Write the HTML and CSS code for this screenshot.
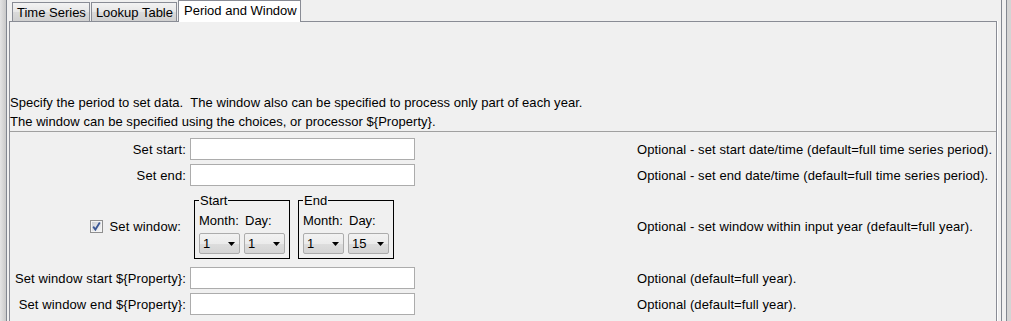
FILE: index.html
```html
<!DOCTYPE html>
<html>
<head>
    <link rel="stylesheet" href="styles.css">
</head>
<body>
    <div class="edge-left"></div>
    <div class="frame">
        <div class="tabs">
            <div class="tab">Time Series</div>
            <div class="tab">Lookup Table</div>
            <div class="tab selected">Period and Window</div>
        </div>
        <div class="panel">
            <div class="intro">
                <div>Specify the period to set data.&nbsp; The window also can be specified to process only part of each year.</div>
                <div>The window can be specified using the choices, or processor ${Property}.</div>
            </div>
            <div class="separator"></div>

            <div class="form">
                <div class="label">Set start:</div>
                <div class="field"></div>
                <div class="desc">Optional - set start date/time (default=full time series period).</div>

                <div class="label">Set end:</div>
                <div class="field"></div>
                <div class="desc">Optional - set end date/time (default=full time series period).</div>

                <div class="label check-label">
                    <svg class="checkbox" width="13" height="13" viewBox="0 0 13 13">
                        <defs>
                            <linearGradient id="cbg" x1="0" y1="0" x2="1" y2="1">
                                <stop offset="0" stop-color="#cbcfd5"/>
                                <stop offset="1" stop-color="#f6f6f6"/>
                            </linearGradient>
                        </defs>
                        <rect x="0.5" y="0.5" width="12" height="12" fill="#f4f4f4" stroke="#8f8f8f"/>
                        <rect x="2" y="2" width="9" height="9" fill="url(#cbg)"/>
                        <path d="M3.2 6.6 L5.4 9.6 L9.8 2.6" fill="none" stroke="#3b5795" stroke-width="1.8"/>
                    </svg>
                    <span>Set window:</span>
                </div>
                <div class="windows">
                    <fieldset class="group">
                        <legend>Start</legend>
                        <div class="group-grid">
                            <span>Month:</span>
                            <span class="day">Day:</span>
                            <div class="combo"><span>1</span><svg width="7" height="4" viewBox="0 0 7 4"><polygon points="0,0 7,0 3.5,4" fill="#000"/></svg></div>
                            <div class="combo"><span>1</span><svg width="7" height="4" viewBox="0 0 7 4"><polygon points="0,0 7,0 3.5,4" fill="#000"/></svg></div>
                        </div>
                    </fieldset>
                    <fieldset class="group">
                        <legend>End</legend>
                        <div class="group-grid">
                            <span>Month:</span>
                            <span class="day">Day:</span>
                            <div class="combo"><span>1</span><svg width="7" height="4" viewBox="0 0 7 4"><polygon points="0,0 7,0 3.5,4" fill="#000"/></svg></div>
                            <div class="combo"><span>15</span><svg width="7" height="4" viewBox="0 0 7 4"><polygon points="0,0 7,0 3.5,4" fill="#000"/></svg></div>
                        </div>
                    </fieldset>
                </div>
                <div class="desc">Optional - set window within input year (default=full year).</div>

                <div class="label">Set window start ${Property}:</div>
                <div class="field"></div>
                <div class="desc">Optional (default=full year).</div>

                <div class="label">Set window end ${Property}:</div>
                <div class="field"></div>
                <div class="desc">Optional (default=full year).</div>
            </div>
        </div>
    </div>
    <div class="edge-right"></div>
</body>
</html>
```

FILE: styles.css
```css
body {
    margin: 0;
    height: 321px;
    overflow: hidden;
    display: flex;
    background-color: #f0f0f0;
    color: #000000;
    font-family: 'Liberation Sans', Arial, sans-serif;
    font-size: 13px;
}
.edge-left {
    width: 6px;
    background: linear-gradient(to right, #e4e4e4, #c9c9c9);
}
.edge-right {
    width: 9px;
    background: linear-gradient(to right, #f0f0f0 0 4px, #828790 4px 5px, #d4d4d4 5px);
}
.frame {
    flex: 1;
    display: flex;
    flex-direction: column;
    border-left: 1px solid #828790;
    border-right: 1px solid #828790;
    padding: 0 4px 0 2px;
}
.tabs {
    display: flex;
    align-items: flex-end;
    height: 21px;
    padding-left: 3px;
    gap: 1px;
    position: relative;
    z-index: 1;
}
.tab {
    box-sizing: border-box;
    height: 19px;
    padding: 2px 3px 0 4px;
    line-height: 15px;
    border: 1px solid #898c95;
    border-bottom: none;
    background: linear-gradient(#f3f3f3, #e6e6e6 50%, #dadada 51%, #d0d0d0);
    white-space: nowrap;
}
.tab.selected {
    height: 22px;
    margin-bottom: -1px;
    padding-left: 5px;
    background: #ffffff;
}
.panel {
    flex: 1;
    border: 1px solid #898c95;
    border-bottom: none;
    box-shadow: 1px 0 0 #ffffff;
}
.intro {
    margin-top: 71px;
    line-height: 19px;
    white-space: nowrap;
    letter-spacing: 0.04px;
}
.separator {
    border-top: 1px solid #a0a0a0;
}
.form {
    display: grid;
    grid-template-columns: 176px 225px 1fr;
    grid-template-rows: 22px 22px 73px 22px 22px;
    column-gap: 4px;
    row-gap: 4px;
    padding-top: 6px;
    align-items: center;
}
.label {
    text-align: right;
    white-space: nowrap;
    line-height: 15px;
    letter-spacing: 0.12px;
}
.check-label {
    display: flex;
    align-items: center;
    justify-content: flex-end;
    gap: 7px;
    padding-right: 5px;
}
.checkbox {
    display: block;
}
.field {
    box-sizing: border-box;
    height: 22px;
    background-color: #ffffff;
    border: 1px solid #acacac;
}
.desc {
    padding-left: 218px;
    white-space: nowrap;
    line-height: 15px;
    letter-spacing: 0.1px;
}
.windows {
    display: flex;
    gap: 8px;
    margin-left: 4px;
    align-self: start;
    margin-top: 3px;
}
.group {
    margin: 0;
    padding: 0 4px 4px 4px;
    border: 1px solid #000000;
    min-width: 0;
}
.group legend {
    padding: 0 1px;
    line-height: 15px;
}
.group-grid {
    display: grid;
    grid-template-columns: 41px 41px;
    grid-template-rows: 25px 21px;
    column-gap: 4px;
    align-items: center;
}
.group-grid .day {
    padding-left: 1px;
}
.combo {
    box-sizing: border-box;
    height: 21px;
    display: flex;
    align-items: center;
    justify-content: space-between;
    padding: 0 4px 0 3px;
    border: 1px solid #acacac;
    border-radius: 2px;
    background: linear-gradient(#f2f2f2, #ebebeb 50%, #dddddd 51%, #d4d4d4);
}
.combo svg {
    display: block;
}
```
